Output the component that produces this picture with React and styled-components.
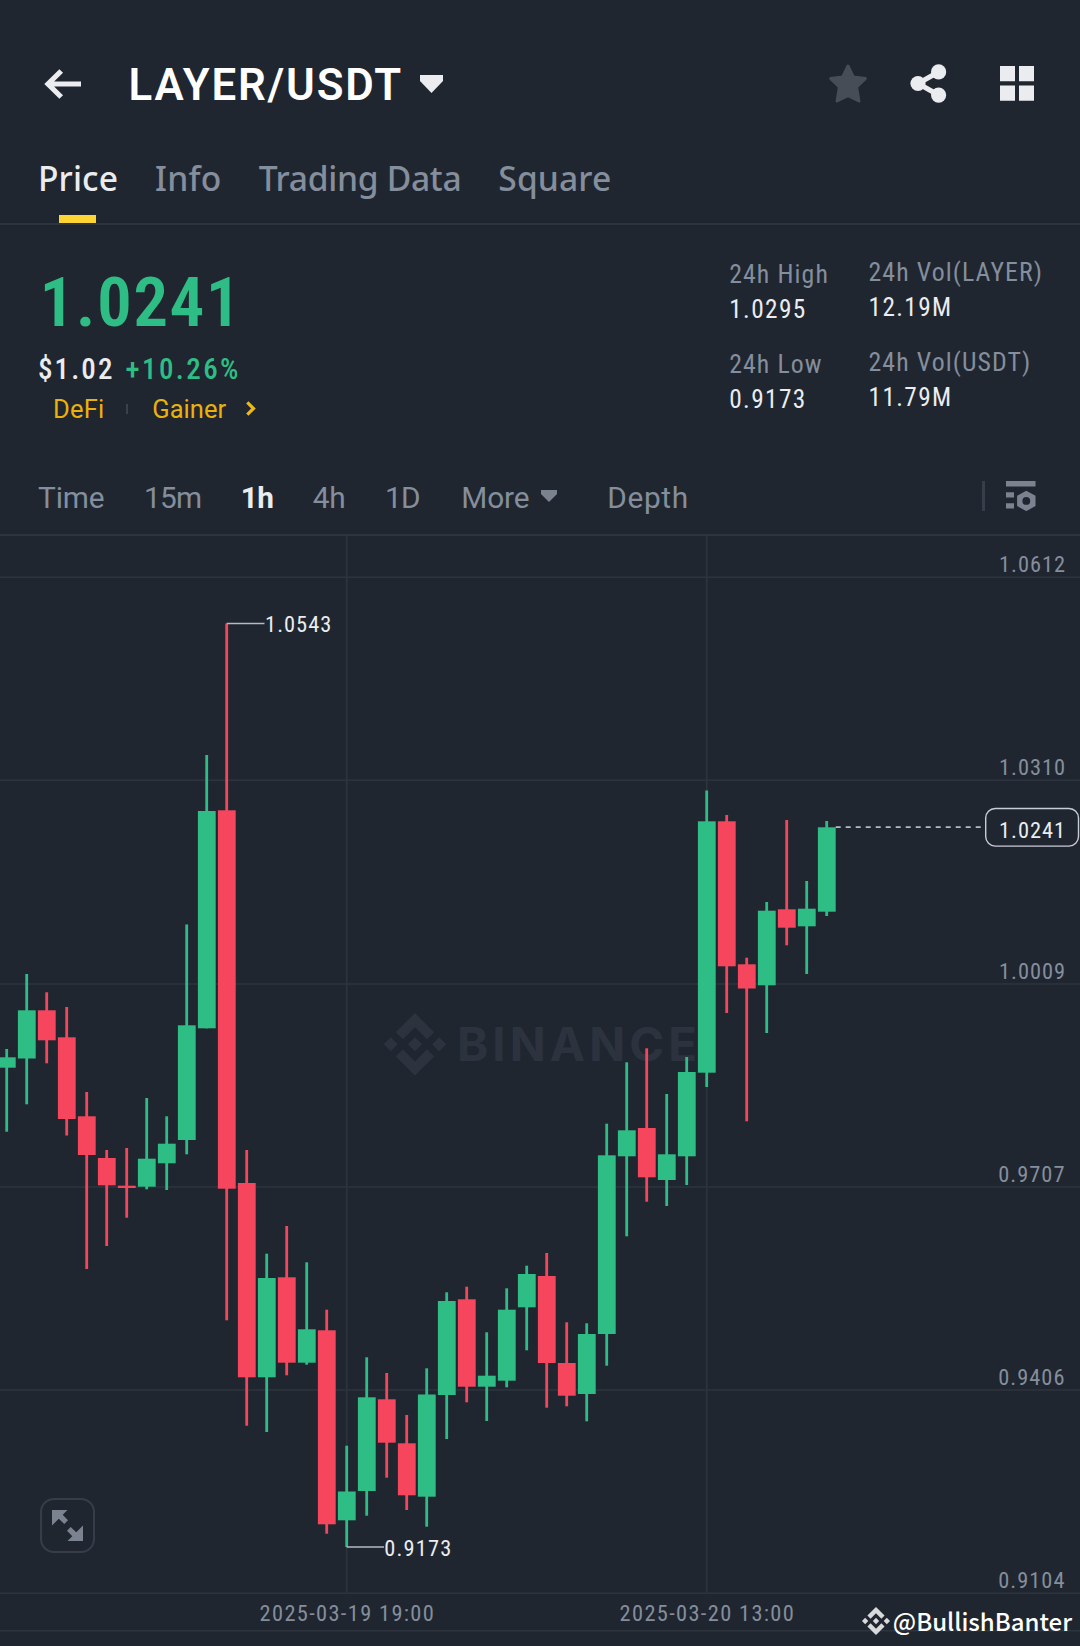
import styled, { createGlobalStyle } from 'styled-components'

const UP = '#2ebd85'
const DOWN = '#f6465d'
const GRID = '#2e343e'
const GREY = '#848e9c'

const GlobalStyle = createGlobalStyle`
    body {
        margin: 0;
        background: #202630;
    }
`
const Page = styled.main`
    position: relative;
    width: 1080px;
    height: 1646px;
    overflow: hidden;
    background: #202630;
    color: #eaecef;
    font-family: Roboto, "Liberation Sans", sans-serif;
`

/* header */
const Header = styled.header`
    display: flex;
    align-items: center;
    box-sizing: border-box;
    height: 157px;
    padding: 10px 46px 0 44px;
`
const Pair = styled.h1`
    display: flex;
    align-items: center;
    gap: 17px;
    margin: 0 0 0 47.5px;
    font-size: 43.8px;
    line-height: 44px;
    font-weight: 600;
    letter-spacing: 1.8px;
    color: #fff;
`
const PairName = styled.span`
    padding-top: 3px;
`
const Actions = styled.div`
    display: flex;
    align-items: center;
    gap: 43px;
    margin-left: auto;

    svg:last-child {
        margin-left: 10px;
    }
`

/* tabs */
const Tabs = styled.nav`
    display: flex;
    gap: 37px;
    box-sizing: border-box;
    height: 68px;
    padding-left: 38px;
    border-bottom: 2px solid ${GRID};
`
const Tab = styled.div`
    position: relative;
    padding-top: 1px;
    font-family: "Noto Sans", sans-serif;
    font-size: 33.6px;
    line-height: 40px;
    font-weight: 500;
    letter-spacing: ${({ $space }) => $space || 0.1}px;
    color: ${({ $active }) => ($active ? '#eaecef' : GREY)};

    &::after {
        content: '';
        display: ${({ $active }) => ($active ? 'block' : 'none')};
        position: absolute;
        left: 21px;
        bottom: 0;
        width: 37px;
        height: 8px;
        background: #fcd535;
    }
`

/* price summary */
const Summary = styled.section`
    display: flex;
    justify-content: space-between;
    box-sizing: border-box;
    height: 236px;
    padding: 0 27.500px 0 38px;
`
const PriceBlock = styled.div`
    padding-top: 42.6px;
`
const LastPrice = styled.div`
    padding-left: 1.5px;
    font-family: "Roboto Condensed", Roboto, sans-serif;
    font-size: 69.4px;
    line-height: 70px;
    font-weight: 600;
    letter-spacing: 1.4px;
    color: ${UP};
`
const Change = styled.div`
    display: flex;
    gap: 11px;
    margin-top: 14.3px;
    font-family: "Roboto Condensed", Roboto, sans-serif;
    font-size: 29px;
    line-height: 34px;
    font-weight: 500;
    letter-spacing: 2.1px;
`
const Percent = styled.span`
    letter-spacing: 2.4px;
    color: ${UP};
`
const Tags = styled.div`
    display: flex;
    align-items: center;
    margin-top: 7.7px;
    padding-left: 15px;
    font-size: 25.5px;
    line-height: 30px;
    color: #eab10c;
`
const Separator = styled.i`
    width: 2px;
    height: 10px;
    margin: 0 24px 0 22px;
    background: #3b414c;
`
const Tag = styled.span`
    letter-spacing: ${({ $space }) => $space || 0}px;
`
const Chevron = styled.svg`
    margin-left: 20px;
`
const Stats = styled.div`
    display: grid;
    grid-template-columns: 139.3px 184px;
`
const StatColumn = styled.div`
    display: flex;
    flex-direction: column;
    gap: 22px;
    padding-top: ${({ $top }) => $top}px;
    font-family: "Roboto Condensed", Roboto, sans-serif;
`
const StatLabel = styled.div`
    font-size: 25.8px;
    line-height: 32px;
    letter-spacing: 1.1px;
    white-space: nowrap;
    color: ${GREY};
`
const StatValue = styled.div`
    margin-top: 4px;
    font-size: 25.3px;
    line-height: 32px;
    letter-spacing: 1.4px;
`

/* intervals */
const IntervalBar = styled.div`
    display: flex;
    align-items: center;
    gap: 39.6px;
    box-sizing: border-box;
    height: 75px;
    padding: 0 44.500px 0 38px;
    border-bottom: 2px solid ${GRID};
`
const Interval = styled.div`
    display: flex;
    align-items: center;
    gap: 11px;
    margin-left: ${({ $left }) => $left || 0}px;
    font-size: 29.8px;
    line-height: 36px;
    font-weight: ${({ $active }) => ($active ? 700 : 400)};
    letter-spacing: ${({ $space }) => $space}px;
    color: ${({ $active }) => ($active ? '#eaecef' : GREY)};

    svg {
        margin-bottom: 4px;
    }
`
const Settings = styled.div`
    display: flex;
    align-items: center;
    gap: 20.500px;
    height: 30px;
    margin: 0 0 3px auto;
`
const Divider = styled.i`
    width: 3px;
    height: 30px;
    background: #383e49;
`

/* chart */
const ChartSvg = styled.svg`
    display: block;
`
const ChartText = styled.text`
    font-family: "Roboto Condensed", Roboto, sans-serif;
    font-size: 22.4px;
    letter-spacing: ${({ $space }) => $space || 1}px;
    fill: ${({ $bright }) => ($bright ? '#eaecef' : GREY)};
`
const WatermarkText = styled.text`
    font-family: Inter, "Liberation Sans", sans-serif;
    font-size: 47.2px;
    font-weight: 700;
`
const ExpandButton = styled.button`
    position: absolute;
    left: 40px;
    top: 1498px;
    display: flex;
    align-items: center;
    justify-content: center;
    box-sizing: border-box;
    width: 55px;
    height: 55px;
    padding: 0;
    border: 2px solid #373d48;
    border-radius: 14px;
    background: transparent;
`
const Signature = styled.div`
    position: absolute;
    right: 8px;
    bottom: 7px;
    display: flex;
    align-items: center;
    gap: 3px;
    font-family: "Noto Sans CJK SC", sans-serif;
    font-size: 24px;
    line-height: 36px;
    font-weight: 500;
    color: #fff;
`

const tabs = [
    { label: 'Price', active: true },
    { label: 'Info', space: 0.3 },
    { label: 'Trading Data', space: -0.3 },
    { label: 'Square' },
]

const stats = [
    [['24h High', '1.0295'], ['24h Low', '0.9173']],
    [['24h Vol(LAYER)', '12.19M'], ['24h Vol(USDT)', '11.79M']],
]

const intervals = [
    { label: 'Time', space: -0.13 },
    { label: '15m', space: -0.8 },
    { label: '1h', space: -0.7, active: true },
    { label: '4h', space: -0.3 },
    { label: '1D', space: -0.8 },
    { label: 'More', space: -0.1, caret: true, left: 2 },
    { label: 'Depth', space: 0.7, left: 11 },
]

// [high, body top, body bottom, low, falling]
const candles = [
    [1049, 1057.3, 1067.7, 1131.7],
    [974, 1010.3, 1058.5, 1104.3],
    [992.3, 1010.3, 1040.3, 1063.3, 1],
    [1007, 1037.3, 1119, 1135.5, 1],
    [1092, 1116.3, 1155, 1269, 1],
    [1150, 1158, 1185.3, 1246, 1],
    [1148, 1185.7, 1188, 1217.7, 1],
    [1098, 1158.7, 1186.7, 1189.3],
    [1116.3, 1143.7, 1163.3, 1190],
    [924.5, 1025.3, 1140, 1154.3],
    [755, 811, 1028.3, 1028.3],
    [623.5, 810.3, 1188.7, 1320.3, 1],
    [1150, 1183, 1377.3, 1425.7, 1],
    [1253.7, 1278, 1377.3, 1432],
    [1226, 1277.3, 1362.7, 1375.3, 1],
    [1262.3, 1329.3, 1362.7, 1364.7],
    [1309.7, 1330.3, 1524.3, 1533.7, 1],
    [1445.7, 1491.5, 1520.3, 1547],
    [1357.3, 1397.3, 1491, 1515.7],
    [1373, 1399.3, 1442.7, 1477.7, 1],
    [1415, 1443.3, 1495.3, 1510, 1],
    [1368.3, 1394.5, 1496.7, 1526.7],
    [1292.3, 1301, 1395, 1439],
    [1286.7, 1299.3, 1386.7, 1402.3, 1],
    [1332.3, 1375.7, 1386.7, 1421],
    [1288.3, 1309.7, 1380.7, 1387.3],
    [1265.7, 1274, 1307.3, 1350.3],
    [1253, 1276, 1363, 1407.7, 1],
    [1322.3, 1363, 1395.7, 1406.3, 1],
    [1323.3, 1334, 1394, 1421.3],
    [1123.7, 1155.3, 1334, 1365.7],
    [1062.3, 1130.3, 1156.3, 1236.3],
    [1048.3, 1128, 1177.3, 1201.7, 1],
    [1094, 1154.3, 1180, 1206],
    [1057, 1072, 1156.3, 1185],
    [790.5, 821.3, 1072.7, 1087],
    [815, 821.3, 966.3, 1013, 1],
    [957.7, 964.3, 988.5, 1121.3, 1],
    [902, 910.7, 985.3, 1033],
    [820, 909.3, 927.7, 945.3, 1],
    [881, 908.7, 926.3, 974],
    [821, 827.3, 911.7, 916],
]

const priceLevels = [
    ['1.0612', 577.3],
    ['1.0310', 780.3],
    ['1.0009', 984],
    ['0.9707', 1187],
    ['0.9406', 1390],
    ['0.9104', 1593.3],
]

const Caret = ({ width, height, color }) => (
    <svg width={width} height={height} viewBox="0 0 23 18" preserveAspectRatio="none" fill={color}>
        <path d="M0 0h23v6L11.5 18 0 6z" />
    </svg>
)

const BinanceLogo = ({ size, ...rest }) => (
    <svg width={size} height={size} viewBox="0 0 24 24" {...rest}>
        <path d="M16.624 13.92l2.717 2.716-7.353 7.353-7.353-7.352 2.718-2.717 4.635 4.66 4.636-4.66zm4.637-4.636L24 12l-2.715 2.716L18.568 12l2.693-2.716zm-9.273 0l2.717 2.692-2.717 2.717L9.272 12l2.716-2.716zm-9.272 0L5.41 12l-2.692 2.692L0 12l2.716-2.716zM11.988.012l7.353 7.329-2.717 2.715-4.636-4.636-4.635 4.66-2.718-2.716L11.988.012z" />
    </svg>
)

function Candle({ x, data }) {
    const [high, top, bottom, low, falling] = data
    return (
        <g fill={falling ? DOWN : UP}>
            <rect x={x - 1.4} y={high} width="2.8" height={low - high} />
            <rect x={x - 8.8} y={top} width="17.8" height={bottom - top} />
        </g>
    )
}

function Chart() {
    return (
        <ChartSvg width="1080" height="1110" viewBox="0 536 1080 1110">
            <g stroke={GRID} strokeWidth="1.6">
                {priceLevels.map(([label, y]) => <line key={label} x1="0" x2="1080" y1={y} y2={y} />)}
                <line x1="0" x2="1080" y1="1630.7" y2="1630.7" />
                <line x1="346.7" x2="346.7" y1="536" y2="1593" />
                <line x1="706.7" x2="706.7" y1="536" y2="1593" />
            </g>

            <g fill="#2d333e">
                <BinanceLogo x="383.7" y="1013" size="62.6" />
                <WatermarkText x="457" y="1061.3" textLength="240">BINANCE</WatermarkText>
            </g>

            {candles.map((data, i) => <Candle key={i} x={6.7 + i * 20} data={data} />)}

            {priceLevels.map(([label, y]) => (
                <ChartText key={label} x={label[0] === '1' ? 999 : 998.3} y={y - 5.1}>{label}</ChartText>
            ))}
            <ChartText x="259.6" y="1621.3" $space={1.34}>2025-03-19 19:00</ChartText>
            <ChartText x="619.6" y="1621.3" $space={1.34}>2025-03-20 13:00</ChartText>

            <g stroke="#b4b9c3" strokeWidth="1.7">
                <line x1="226.7" x2="264.5" y1="623.5" y2="623.5" />
                <line x1="346.7" x2="384" y1="1547" y2="1547" />
                <line x1="835.7" x2="982" y1="827.2" y2="827.2" strokeDasharray="5 5" />
            </g>
            <ChartText $bright x="265.1" y="632">1.0543</ChartText>
            <ChartText $bright x="384.2" y="1556" $space={1.2}>0.9173</ChartText>

            <rect x="985.7" y="808.5" width="92.8" height="37.6" rx="9.5" fill="#202630" stroke="#c9ccd5" strokeWidth="1.4" />
            <ChartText $bright x="999" y="838.3">1.0241</ChartText>
        </ChartSvg>
    )
}

export default function App() {
    return (
        <Page>
            <GlobalStyle />
            <Header>
                <svg width="37" height="30" viewBox="0 0 37 30" fill="none" stroke="#eaecef" strokeWidth="5.2">
                    <path d="M37 15H5M17.2 2L4 15l13.2 13" />
                </svg>
                <Pair>
                    <PairName>LAYER/USDT</PairName>
                    <Caret width={23} height={18} color="#eaecef" />
                </Pair>
                <Actions>
                    <svg width="38" height="39" viewBox="0 0 38 39" fill="#474d57" stroke="#474d57" strokeWidth="3" strokeLinejoin="round">
                        <path d="M19 2l5.3 10.9 12 1.7-8.7 8.4 2.3 14L19 31.6 8.1 37l2.3-14-8.7-8.4 12-1.7z" />
                    </svg>
                    <svg width="37" height="39" viewBox="0 0 37 39" fill="#eaecef">
                        <path d="M28.5 8L8 19.5 28.500 31" fill="none" stroke="#eaecef" strokeWidth="5" />
                        <circle cx="8" cy="19.5" r="7.6" />
                        <circle cx="28.6" cy="7.9" r="7.6" />
                        <circle cx="28.6" cy="31.1" r="7.6" />
                    </svg>
                    <svg width="34" height="35" viewBox="0 0 34 35" fill="#eaecef">
                        <path d="M0 0h15v15.2H0zM19 0h15v15.2H19zM0 19.4h15v15.4H0zM19 19.4h15v15.4H19z" />
                    </svg>
                </Actions>
            </Header>

            <Tabs>
                {tabs.map(({ label, active, space }) => (
                    <Tab key={label} $active={active} $space={space}>{label}</Tab>
                ))}
            </Tabs>

            <Summary>
                <PriceBlock>
                    <LastPrice>1.0241</LastPrice>
                    <Change>
                        <span>$1.02</span>
                        <Percent>+10.26%</Percent>
                    </Change>
                    <Tags>
                        <Tag $space={0.2}>DeFi</Tag>
                        <Separator />
                        <Tag>Gainer</Tag>
                        <Chevron width="10" height="15" viewBox="0 0 10 15" fill="none" stroke="#f0b90b" strokeWidth="3.2">
                            <path d="M1.3 1.3l6.200 6.200-6.200 6.200" />
                        </Chevron>
                    </Tags>
                </PriceBlock>
                <Stats>
                    {stats.map((column, i) => (
                        <StatColumn key={i} $top={i === 0 ? 32.5 : 30.5}>
                            {column.map(([label, value]) => (
                                <div key={label}>
                                    <StatLabel>{label}</StatLabel>
                                    <StatValue>{value}</StatValue>
                                </div>
                            ))}
                        </StatColumn>
                    ))}
                </Stats>
            </Summary>

            <IntervalBar>
                {intervals.map(({ label, active, space, caret, left }) => (
                    <Interval key={label} $active={active} $space={space} $left={left}>
                        {label}
                        {caret && <Caret width={16} height={12} color="#7b8390" />}
                    </Interval>
                ))}
                <Settings>
                    <Divider />
                    <svg width="30" height="30" viewBox="0 0 30 30" fill="#7b8390">
                        <path d="M0 0h29.5v5.5H0zM0 11.3h8v5.2H0zM0 22.3h8v5.2H0z" />
                        <path fillRule="evenodd" d="M20.3 9.7l9.2 5v10.4l-9.2 5-9.2-5V14.7zM20.3 16a3.9 3.9 0 1 0 0 7.800 3.9 3.9 0 0 0 0-7.800z" />
                    </svg>
                </Settings>
            </IntervalBar>

            <Chart />

            <ExpandButton aria-label="Expand">
                <svg width="31" height="31" viewBox="0 0 31 31" fill="#7b8390">
                    <path d="M0 0h15.500l-4.800 4.800 5.300 5.500-3.700 3.700-5.500-5.300L0 15.500z" />
                    <path d="M31 31H15.500l4.800-4.800-5.300-5.500 3.700-3.700 5.500 5.300 6.800-6.800z" />
                </svg>
            </ExpandButton>

            <Signature>
                <BinanceLogo size={28} fill="#d8d9dd" />
                @BullishBanter
            </Signature>
        </Page>
    )
}
